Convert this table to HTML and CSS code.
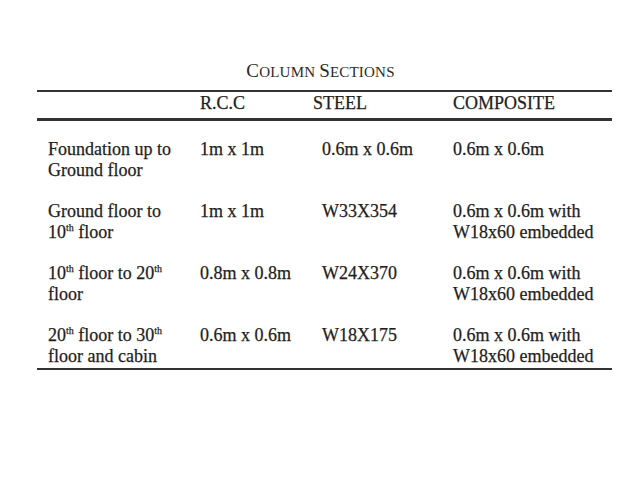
FILE: index.html
```html
<!DOCTYPE html>
<html>
<head>
<meta charset="utf-8">
<link rel="stylesheet" href="styles.css">
</head>
<body>
<div class="page">
  <h1 class="title"><span class="big">C</span><span class="sm">OLUMN</span> <span class="big">S</span><span class="sm">ECTIONS</span></h1>
  <div class="table">
    <div class="row head">
      <div class="c c1"></div>
      <div class="c c2">R.C.C</div>
      <div class="c c3">STEEL</div>
      <div class="c c4">COMPOSITE</div>
    </div>
    <div class="body">
      <div class="row">
        <div class="c c1">Foundation up to<br>Ground floor</div>
        <div class="c c2">1m x 1m</div>
        <div class="c c3 v">0.6m x 0.6m</div>
        <div class="c c4">0.6m x 0.6m</div>
      </div>
      <div class="row">
        <div class="c c1">Ground floor to<br>10<sup>th</sup> floor</div>
        <div class="c c2">1m x 1m</div>
        <div class="c c3 v">W33X354</div>
        <div class="c c4">0.6m x 0.6m with<br>W18x60 embedded</div>
      </div>
      <div class="row">
        <div class="c c1">10<sup>th</sup> floor to 20<sup>th</sup><br>floor</div>
        <div class="c c2">0.8m x 0.8m</div>
        <div class="c c3 v">W24X370</div>
        <div class="c c4">0.6m x 0.6m with<br>W18x60 embedded</div>
      </div>
      <div class="row">
        <div class="c c1">20<sup>th</sup> floor to 30<sup>th</sup><br>floor and cabin</div>
        <div class="c c2">0.6m x 0.6m</div>
        <div class="c c3 v">W18X175</div>
        <div class="c c4">0.6m x 0.6m with<br>W18x60 embedded</div>
      </div>
    </div>
  </div>
</div>
</body>
</html>
```

FILE: styles.css
```css
html, body {
  margin: 0;
  padding: 0;
  background: #fff;
}
.page {
  width: 638px;
  height: 478px;
  padding-top: 60px;
  box-sizing: border-box;
  font-family: "Liberation Serif", "Times New Roman", serif;
  color: #1e1e1e;
  -webkit-text-stroke: 0.25px #1e1e1e;
}
.title {
  margin: 0;
  font-weight: normal;
  text-align: center;
  line-height: 22px;
  color: #2a2a2a;
  padding-left: 3px;
  font-size: 15px;
  letter-spacing: 0.2px;
  -webkit-text-stroke: 0;
}
.title .big {
  font-size: 19px;
}
.title .sm {
  font-size: 15px;
}
.table {
  margin: 7px 0 0 37px;
  width: 575px;
  border-top: 2px solid #333;
  border-bottom: 2px solid #333;
}
.row {
  display: grid;
  grid-template-columns: 163px 113px 140px 159px;
  font-size: 18px;
  line-height: 21px;
}
.head {
  border-bottom: 3px solid #333;
  padding: 1px 0 4px;
}
.body {
  padding: 18px 0 1px;
}
.body .row {
  margin-bottom: 20px;
}
.body .row:last-child {
  margin-bottom: 0;
}
.c1 {
  padding-left: 11px;
}
.v {
  padding-left: 9px;
}
sup {
  font-size: 10px;
  line-height: 0;
  vertical-align: 7px;
}
```
